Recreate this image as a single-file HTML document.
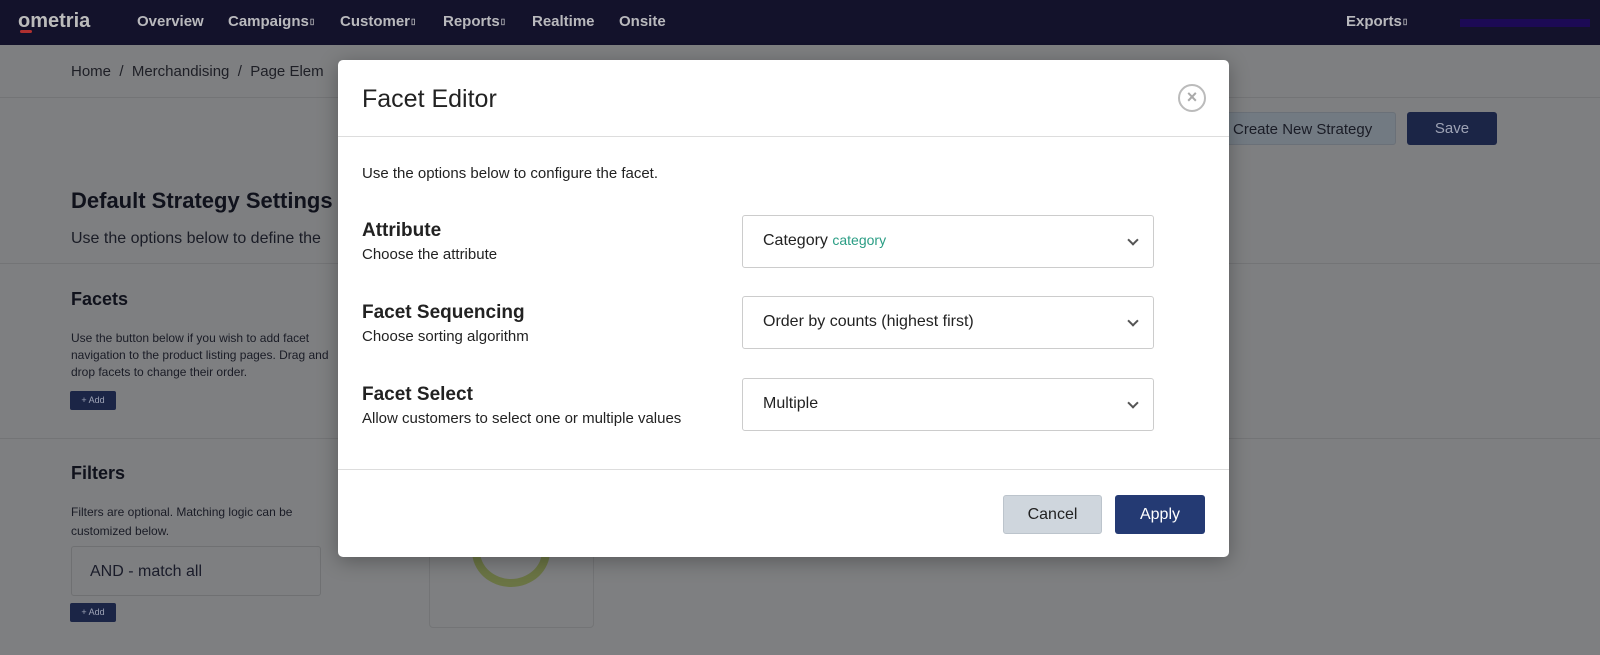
<!DOCTYPE html>
<html><head><style>
*{box-sizing:border-box;margin:0;padding:0}
body{width:1600px;height:655px;overflow:hidden;background:#7e7f81;font-family:"Liberation Sans",sans-serif;position:relative;color:#1a1c2a}
.nav{position:absolute;left:0;top:0;width:1600px;height:45px;background:#13122b;color:#b9b9bd;font-weight:bold;font-size:15px}
.nav > span{position:absolute;top:13px}
.sm{font-size:8px;vertical-align:2px;margin-left:1px}
.a{position:absolute}
.hr{position:absolute;left:0;width:1600px;height:1px;background:#737476}
.btnadd{position:absolute;background:#1b2546;color:#9ea3b5;font-size:9px;border-radius:2px;width:46px;height:19px;line-height:19px;text-align:center}
.modal{position:absolute;left:338px;top:60px;width:891px;height:497px;background:#fff;border-radius:5px;box-shadow:0 4px 20px rgba(0,0,0,.3)}
.sel{position:absolute;left:404px;width:412px;height:53px;border:1px solid #ccc;border-radius:3px;font-size:16px;padding:16px 0 0 20px;color:#222}
.sel:after{content:"";position:absolute;right:16px;top:20px;width:6px;height:6px;border-right:2px solid #555;border-bottom:2px solid #555;transform:rotate(45deg)}
.lbl{position:absolute;left:24px;font-size:19px;font-weight:bold;color:#222}
.sub{position:absolute;left:24px;font-size:15px;color:#222}
</style></head><body>
<div class="nav">
<span style="left:18px;top:10px;font-size:20px;color:#bbb;font-weight:bold">ometria</span>
<div class="a" style="left:20px;top:30px;width:12px;height:3px;background:#b03030;border-radius:2px"></div>
<span style="left:137px">Overview</span>
<span style="left:228px">Campaigns<span class="sm">▯</span></span>
<span style="left:340px">Customer<span class="sm">▯</span></span>
<span style="left:443px">Reports<span class="sm">▯</span></span>
<span style="left:532px">Realtime</span>
<span style="left:619px">Onsite</span>
<span style="left:1346px">Exports<span class="sm">▯</span></span>
<div class="a" style="left:1460px;top:19px;width:130px;height:8px;background:#1c0a55"></div>
</div>
<div class="a" style="left:71px;top:63px;font-size:15px;color:#1e1f26">Home &nbsp;/ &nbsp;Merchandising &nbsp;/ &nbsp;Page Elem</div>
<div class="hr" style="top:97px"></div>
<div class="a" style="left:1218px;top:112px;width:178px;height:33px;background:#727a82;border:1px solid #6a7078;border-radius:3px;font-size:15px;color:#1a1c26;padding:8px 0 0 14px">Create New Strategy</div>
<div class="a" style="left:1407px;top:112px;width:90px;height:33px;background:#1b2546;border-radius:3px;font-size:15px;color:#9ea3b5;text-align:center;line-height:33px">Save</div>
<div class="a" style="left:71px;top:188px;font-size:22px;font-weight:bold;color:#10121c">Default Strategy Settings</div>
<div class="a" style="left:71px;top:230px;font-size:16px;color:#1a1c26">Use the options below to define the</div>
<div class="hr" style="top:263px"></div>
<div class="a" style="left:71px;top:289px;font-size:18px;font-weight:bold;color:#10121c">Facets</div>
<div class="a" style="left:71px;top:330px;font-size:12px;line-height:17px;color:#1a1c26;width:280px">Use the button below if you wish to add facet navigation to the product listing pages. Drag and drop facets to change their order.</div>
<div class="btnadd" style="left:70px;top:391px">+ Add</div>
<div class="hr" style="top:438px"></div>
<div class="a" style="left:71px;top:463px;font-size:18px;font-weight:bold;color:#10121c">Filters</div>
<div class="a" style="left:71px;top:503px;font-size:12px;line-height:19px;color:#1a1c26;width:280px">Filters are optional. Matching logic can be customized below.</div>
<div class="a" style="left:71px;top:546px;width:250px;height:50px;border:1px solid #6f7072;border-radius:3px;font-size:16px;padding:16px 0 0 18px">AND - match all</div>
<div class="btnadd" style="left:70px;top:603px">+ Add</div>
<div class="a" style="left:429px;top:520px;width:165px;height:108px;border:1px solid #737476;border-radius:4px"></div>
<div class="a" style="left:472px;top:515px;width:78px;height:72px;border:8px solid #6a7444;border-radius:50%"></div>
<div class="modal">
<div class="a" style="left:24px;top:25px;font-size:25px;color:#222">Facet Editor</div>
<div class="a" style="left:840px;top:24px;width:28px;height:28px;border:2px solid #bbb;border-radius:50%;color:#aaa;text-align:center;line-height:23px;font-size:18px;font-weight:bold">×</div>
<div class="a" style="left:0;top:76px;width:891px;height:1px;background:#ddd"></div>
<div class="a" style="left:24px;top:105px;font-size:15px;color:#222">Use the options below to configure the facet.</div>
<div class="lbl" style="top:160px">Attribute</div>
<div class="sub" style="top:186px">Choose the attribute</div>
<div class="sel" style="top:155px">Category <span style="color:#2a9d84;font-size:14px">category</span></div>
<div class="lbl" style="top:242px">Facet Sequencing</div>
<div class="sub" style="top:268px">Choose sorting algorithm</div>
<div class="sel" style="top:236px">Order by counts (highest first)</div>
<div class="lbl" style="top:324px">Facet Select</div>
<div class="sub" style="top:350px">Allow customers to select one or multiple values</div>
<div class="sel" style="top:318px">Multiple</div>
<div class="a" style="left:0;top:409px;width:891px;height:1px;background:#ddd"></div>
<div class="a" style="left:665px;top:435px;width:99px;height:39px;background:#cfd6dd;border:1px solid #bcc4cc;border-radius:3px;font-size:16px;color:#222;text-align:center;line-height:38px">Cancel</div>
<div class="a" style="left:777px;top:435px;width:90px;height:39px;background:#243a73;border-radius:3px;font-size:16px;color:#fff;text-align:center;line-height:39px">Apply</div>
</div>
</body></html>
